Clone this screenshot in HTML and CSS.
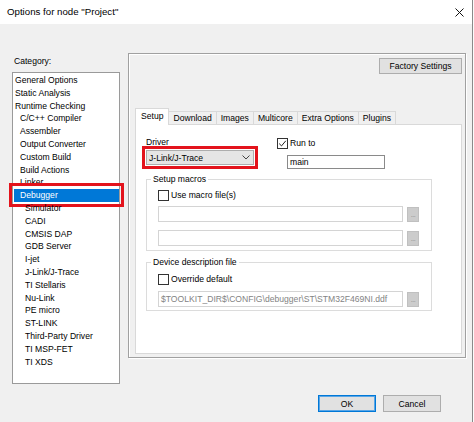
FILE: index.html
```html
<!DOCTYPE html>
<html lang="en">
<head>
<meta charset="utf-8">
<title>Options for node "Project"</title>
<link rel="stylesheet" href="styles.css">
</head>
<body>
<div class="window">
  <div class="titlebar">
    <span class="title">Options for node "Project"</span>
    <svg class="close" width="9" height="9" viewBox="0 0 9 9"><path d="M0.5 0.5L8.5 8.5M8.5 0.5L0.5 8.5" stroke="#111" stroke-width="1" fill="none"/></svg>
  </div>
  <div class="client">
    <div class="columns">
      <div class="category">
        <div class="cat-label">Category:</div>
        <ul class="list">
          <li class="l0">General Options</li>
          <li class="l0">Static Analysis</li>
          <li class="l0">Runtime Checking</li>
          <li class="l1">C/C++ Compiler</li>
          <li class="l1">Assembler</li>
          <li class="l1">Output Converter</li>
          <li class="l1">Custom Build</li>
          <li class="l1">Build Actions</li>
          <li class="l1">Linker</li>
          <li class="l1 selected">Debugger<span class="mark"></span></li>
          <li class="l2">Simulator</li>
          <li class="l2">CADI</li>
          <li class="l2">CMSIS DAP</li>
          <li class="l2">GDB Server</li>
          <li class="l2">I-jet</li>
          <li class="l2">J-Link/J-Trace</li>
          <li class="l2">TI Stellaris</li>
          <li class="l2">Nu-Link</li>
          <li class="l2">PE micro</li>
          <li class="l2">ST-LINK</li>
          <li class="l2">Third-Party Driver</li>
          <li class="l2">TI MSP-FET</li>
          <li class="l2">TI XDS</li>
        </ul>
      </div>
      <div class="frame">
        <div class="frame-top"><button class="btn factory">Factory Settings</button></div>
        <div class="tabs">
          <div class="tab active">Setup</div>
          <div class="tab">Download</div>
          <div class="tab">Images</div>
          <div class="tab">Multicore</div>
          <div class="tab">Extra Options</div>
          <div class="tab">Plugins</div>
        </div>
        <div class="page">
          <div class="top-row">
            <div class="drv-col">
              <div class="drv-label">Driver</div>
              <div class="redbox">
                <div class="combo">
                  <span>J-Link/J-Trace</span>
                  <svg class="chev" width="8" height="5" viewBox="0 0 8 5"><path d="M0.5 0.5L4 4L7.5 0.5" stroke="#444" stroke-width="1" fill="none"/></svg>
                </div>
              </div>
            </div>
            <div class="run-col">
              <div class="cb-row">
                <span class="cb"><svg width="9" height="9" viewBox="0 0 9 9"><path d="M1.2 4.6L3.5 6.9L7.8 1.8" stroke="#222" stroke-width="1" fill="none"/></svg></span>
                <span class="cb-text">Run to</span>
              </div>
              <div class="main-input">main</div>
            </div>
          </div>
          <fieldset class="group g1">
            <legend>Setup macros</legend>
            <div class="cb-row"><span class="cb"></span><span class="cb-text">Use macro file(s)</span></div>
            <div class="file-row first"><div class="input dis"></div><div class="dots">...</div></div>
            <div class="file-row second"><div class="input dis"></div><div class="dots">...</div></div>
          </fieldset>
          <fieldset class="group g2">
            <legend>Device description file</legend>
            <div class="cb-row"><span class="cb"></span><span class="cb-text">Override default</span></div>
            <div class="file-row first"><div class="input dis">$TOOLKIT_DIR$\CONFIG\debugger\ST\STM32F469NI.ddf</div><div class="dots">...</div></div>
          </fieldset>
        </div>
      </div>
    </div>
    <div class="footer">
      <button class="btn ok">OK</button>
      <button class="btn cancel">Cancel</button>
    </div>
  </div>
</div>
</body>
</html>
```

FILE: styles.css
```css
* { box-sizing: border-box; }
html, body { margin: 0; padding: 0; background: #fbfbfb; }
body {
  font-family: "Liberation Sans", Arial, sans-serif;
  font-size: 8.6px;
  color: #000;
}
.window {
  width: 473px;
  height: 422px;
  border-right: 1px solid #8a8a8a;
  background: #f0f0f0;
  display: flex;
  flex-direction: column;
}
.titlebar {
  height: 24px;
  background: #fff;
  display: flex;
  align-items: center;
  justify-content: space-between;
  padding: 0 8px 0 7px;
}
.title { font-size: 9.7px; line-height: 12px; }
.close { display: block; margin-top: 1px; }
.client { flex: 1; background: #f0f0f0; }
.columns {
  display: flex;
  align-items: flex-start;
  gap: 8px;
  padding: 29px 0 0 12px;
}
.category { width: 108px; }
.cat-label { margin-top: 2px; line-height: 12px; height: 12px; padding-left: 2px; margin-bottom: 5px; }
.list {
  list-style: none;
  margin: 0;
  padding: 1px 0 0 0;
  height: 312px;
  background: #fff;
  border: 1px solid #9a9a9a;
}
.list li { line-height: 12.8px; height: 12.8px; white-space: nowrap; position: relative; }
.l0 { padding-left: 2px; }
.l1 { padding-left: 7px; }
.l2 { padding-left: 12px; }
.list li.selected {
  background: #0078d7;
  color: #fff;
  margin-left: 1px;
  padding-left: 6px;
}
.mark {
  position: absolute;
  top: -6px; bottom: -5px; left: -5px; right: -5px;
  border: 3px solid #e3131c;
}
.frame {
  width: 338px;
  border: 1px solid #a0a0a0;
  box-shadow: inset 1px 1px 0 #fff, 1px 1px 0 #fff;
  padding: 4px 3px 3px 6px;
}
.frame-top { display: flex; justify-content: flex-end; }
.btn {
  font-family: "Liberation Sans", Arial, sans-serif;
  font-size: 8.6px;
  color: #000;
  background: #e1e1e1;
  border: 1px solid #adadad;
  padding: 0;
  margin: 0;
}
.factory { width: 83px; height: 16px; }
.tabs {
  margin-top: 34px;
  height: 16px;
  display: flex;
  align-items: flex-end;
}
.tab {
  height: 13px;
  line-height: 12px;
  padding: 0 4px;
  border: 1px solid #d9d9d9;
  border-bottom: none;
  margin-left: -1px;
  background: #f0f0f0;
  white-space: nowrap;
}
.tab.active {
  height: 17px;
  line-height: 14px;
  margin-left: 0;
  margin-bottom: -1px;
  padding: 0 5px;
  background: #fff;
  position: relative;
  z-index: 1;
}
.page {
  width: 327px;
  height: 230px;
  background: #fff;
  border: 1px solid #d9d9d9;
}
.top-row { display: flex; align-items: flex-start; padding: 12px 0 0 6px; }
.drv-col { width: 116px; }
.drv-label { padding-left: 4px; line-height: 10px; height: 10px; margin-bottom: -1px; }
.redbox {
  height: 23px;
  border: 3px solid #e3131c;
  padding: 1px;
  background: #fff;
}
.combo {
  height: 15px;
  border: 1px solid #adadad;
  background: #e5e5e5;
  display: flex;
  align-items: center;
  justify-content: space-between;
  padding: 0 3px 0 2px;
}
.chev { display: block; }
.run-col { margin-left: 19px; padding-top: 1px; }
.cb-row { display: flex; align-items: center; height: 11px; }
.cb {
  width: 11px; height: 11px;
  border: 1px solid #333;
  background: #fff;
  display: flex;
  align-items: center;
  justify-content: center;
}
.cb svg { display: block; }
.cb-text { margin-left: 2px; line-height: 11px; }
.main-input {
  margin-top: 6px;
  margin-left: 10px;
  width: 98px;
  height: 14px;
  border: 1px solid #8a8a8a;
  padding-left: 2px;
  line-height: 12px;
}
.group {
  margin: 5px 0 0 10px;
  width: 286px;
  border: 1px solid #dcdcdc;
  padding: 5px 0 4px 11px;
  min-width: 0;
}
.group legend {
  line-height: 11px;
  padding: 0 2px;
  margin-left: -7px;
}
.g2 { margin-top: 6px; padding-top: 6px; padding-bottom: 3px; }
.file-row { display: flex; align-items: center; gap: 4px; }
.g1 .first { margin-top: 5px; }
.g1 .second { margin-top: 8px; }
.g2 .first { margin-top: 6px; }
.input {
  width: 245px;
  height: 16px;
  border: 1px solid #d4d4d4;
  background: #fff;
  line-height: 14px;
  padding-left: 2px;
  white-space: nowrap;
  overflow: hidden;
}
.input.dis { color: #838383; }
.dots {
  width: 12px;
  height: 15px;
  background: #cccccc;
  border: 1px solid #c0c0c0;
  color: #8f8f8f;
  font-size: 7px;
  line-height: 14px;
  text-align: center;
  letter-spacing: -0.5px;
}
.footer {
  display: flex;
  justify-content: flex-end;
  gap: 7px;
  margin-top: 11px;
  padding-right: 31px;
}
.ok, .cancel { width: 58px; height: 17px; }
.ok { border: 1px solid #0078d7; box-shadow: inset 0 0 0 1px #5aa6e6; }
```
